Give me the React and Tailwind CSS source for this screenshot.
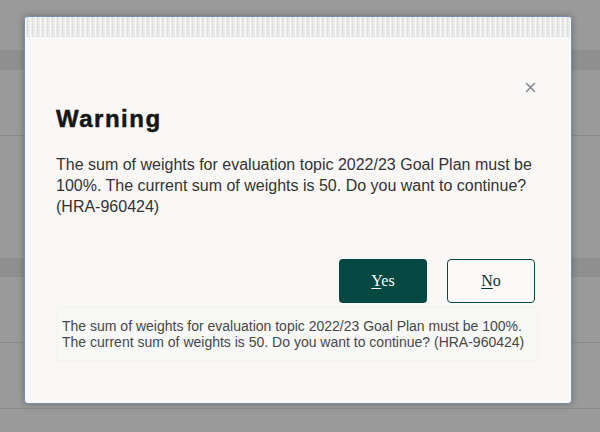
import React from "react";

export default function App() {
  return (
    <div className="relative w-[600px] h-[432px] overflow-hidden bg-[#9a9a9a]" style={{ fontFamily: '"Liberation Sans", Arial, sans-serif' }}>
      {/* background page */}
      <div className="flex flex-col">
        <div className="h-[50px]" />
        <div className="h-[20px] bg-[#8f8f8f]" />
        <div className="h-[65px]" />
        <div className="h-px bg-[#868b93]" />
        <div className="h-[122px]" />
        <div className="h-[19px] bg-[#8f8f8f]" />
        <div className="h-[65px]" />
        <div className="h-px bg-[#868b93]" />
        <div className="h-[65px]" />
        <div className="h-px bg-[#8c8c8c]" />
      </div>

      {/* dialog */}
      <div className="absolute left-[24px] top-[16px] w-[548px] h-[388px] rounded-[4px] border-[1.5px] border-[#7590a8] bg-[#f9f8f6] shadow-[0_0_6px_rgba(60,60,60,0.45)] overflow-hidden flex flex-col">
        <div
          className="h-[20px] shrink-0 bg-[#eeeded]"
          style={{
            backgroundImage:
              "repeating-linear-gradient(90deg, rgba(255,255,255,0.75) 0 1px, transparent 1px 2px, rgba(210,210,210,0.5) 2px 3px, transparent 3px 5px), repeating-linear-gradient(0deg, rgba(220,220,220,0.5) 0 1px, transparent 1px 3px)",
          }}
        />
        <div className="relative flex-1 pl-[31px] pr-[34px]">
          <button className="absolute left-[499px] top-[44px] w-[12px] h-[12px] flex items-center justify-center">
            <svg width="11" height="11" viewBox="0 0 11 11">
              <path d="M1.5 1.5 L9.5 9.5 M9.5 1.5 L1.5 9.5" stroke="#7b818a" strokeWidth="1.4" strokeLinecap="round" />
            </svg>
          </button>
          <h1 className="mt-[68px] text-[24px] leading-[28px] font-bold tracking-[1.5px] text-[#161616] [-webkit-text-stroke:0.5px_#161616]">Warning</h1>
          <p className="mt-[21px] w-[478px] text-[16px] leading-[21px] text-[#333333]">
            The sum of weights for evaluation topic 2022/23 Goal Plan must be 100%. The current sum of weights is 50. Do you want to continue? (HRA-960424)
          </p>
          <div className="mt-[42px] flex justify-end gap-[20px] pr-[2px]">
            <button
              className="w-[88px] h-[44px] rounded-[4px] bg-[#044842] text-white text-[16px]"
              style={{ fontFamily: '"Liberation Serif", "Times New Roman", serif' }}
            >
              <span className="underline underline-offset-2">Y</span>es
            </button>
            <button
              className="w-[88px] h-[44px] rounded-[4px] border border-[#044842] bg-[#fbfaf8] text-[#08312f] text-[16px]"
              style={{ fontFamily: '"Liberation Serif", "Times New Roman", serif' }}
            >
              <span className="underline underline-offset-2">N</span>o
            </button>
          </div>
          <div className="mt-[5px] ml-[1px] w-[480px] h-[52px] bg-[#f8f8f7] shadow-[0_0_3px_rgba(0,0,0,0.06)] pl-[5px] pt-[10px] text-[14px] leading-[16px] text-[#474747]">
            The sum of weights for evaluation topic 2022/23 Goal Plan must be 100%.
            <br />
            The current sum of weights is 50. Do you want to continue? (HRA-960424)
          </div>
        </div>
      </div>
    </div>
  );
}
